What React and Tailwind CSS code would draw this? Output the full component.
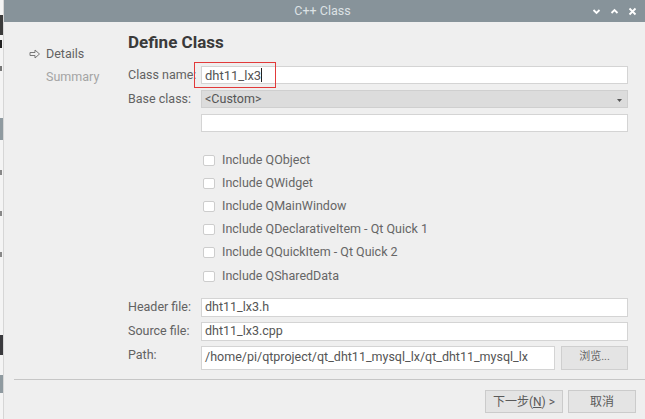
import React from 'react';

const FONT = { fontFamily: 'Roboto, "Noto Sans CJK SC", sans-serif' };

function Field({ children, className = '' }) {
  return (
    <div className={`h-[18px] flex items-center bg-white border border-[#d4d4d4] px-[3px] text-[12.5px] text-[#555] ${className}`}>
      {children}
    </div>
  );
}

function Row({ label, children, top = false }) {
  return (
    <div className={`flex ${top ? 'items-start' : 'items-center'}`}>
      <div className="w-[73px] shrink-0 text-[12.5px] text-[#626262]">{label}</div>
      <div className="flex-1 min-w-0">{children}</div>
    </div>
  );
}

function Check({ label }) {
  return (
    <div className="h-[23.2px] flex items-center pl-[2px]">
      <div className="w-[12px] h-[11px] bg-white border border-[#cdcdcd] rounded-[2px]" />
      <span className="ml-[7px] text-[12.5px] text-[#666]">{label}</span>
    </div>
  );
}

// Slice of the window behind the dialog, visible at the left edge.
function BackStrip() {
  return (
    <div className="relative w-[3px] shrink-0 bg-[#f4f4f4] overflow-hidden">
      <div className="absolute left-0 top-[15px] w-[3px] h-[20px] bg-[#3b3b3b]" />
      <div className="absolute left-0 top-[40px] w-[2px] h-[8px] bg-[#222]" />
      <div className="absolute left-0 top-[66px] w-[2px] h-[5px] bg-[#777]" />
      <div className="absolute left-0 top-[118px] w-[3px] h-[22px] bg-[#8f9aa0]" />
      <div className="absolute left-0 top-[170px] w-[2px] h-[5px] bg-[#888]" />
      <div className="absolute left-0 top-[211px] w-[2px] h-[5px] bg-[#888]" />
      <div className="absolute left-0 top-[252px] w-[2px] h-[5px] bg-[#888]" />
      <div className="absolute left-0 top-[335px] w-[3px] h-[20px] bg-[#3a3a3d]" />
      <div className="absolute left-0 top-[375px] w-[3px] h-[18px] bg-[#8f9aa0]" />
    </div>
  );
}

export default function App() {
  return (
    <div className="w-[645px] h-[419px] flex overflow-hidden bg-[#efefef]" style={FONT}>
      <BackStrip />
      <div className="flex-1 flex flex-col border-l border-[#d6d6d6] bg-[#efefef]">
        {/* title bar */}
        <div className="h-[22px] shrink-0 bg-[#87939a] relative flex items-center justify-center">
          <span className="text-[12.5px] text-[#dde2e5] ml-[-4px]">C++ Class</span>
          <div className="absolute right-[8px] top-0 h-[22px] flex items-center gap-[9px]">
            <svg width="9" height="9" viewBox="0 0 9 9"><path d="M1.5 3l3 3 3-3" stroke="#fff" strokeWidth="1.8" fill="none" /></svg>
            <svg width="9" height="9" viewBox="0 0 9 9"><path d="M1.5 6l3-3 3 3" stroke="#fff" strokeWidth="1.8" fill="none" /></svg>
            <svg width="9" height="9" viewBox="0 0 9 9"><path d="M1.5 1.5l6 6M7.5 1.5l-6 6" stroke="#fff" strokeWidth="1.8" fill="none" /></svg>
          </div>
        </div>

        <div className="flex-1 flex">
          {/* wizard steps */}
          <div className="w-[124px] shrink-0 pl-[25px] pt-[23px] text-[12.5px]">
            <div className="h-[18px] flex items-center text-[#626262]">
              <svg width="12" height="10" viewBox="0 0 12 10" className="mr-[5px]">
                <path d="M1 3.5h5v-2.5l4.5 4-4.5 4v-2.5h-5z" stroke="#777" strokeWidth="1" fill="none" strokeLinejoin="round" />
              </svg>
              Details
            </div>
            <div className="h-[18px] mt-[5px] pl-[17px] flex items-center text-[#a4a4a4]">Summary</div>
          </div>

          {/* page */}
          <div className="flex-1 pr-[17px] pt-[11px]">
            <div className="h-[20px] flex items-center text-[17px] font-bold text-[#3a3a3a]">Define Class</div>

            <div className="mt-[13px] flex flex-col gap-[5px]">
              <Row label="Class name:">
                <div className="relative">
                  <Field className="text-[13px]">
                    dht11_lx3<span className="inline-block w-px h-[14px] bg-[#222]" />
                  </Field>
                  <div className="absolute left-[-7px] top-[-4px] w-[82px] h-[26px] border border-[#e23a3a]" />
                </div>
              </Row>
              <Row label="Base class:">
                <div className="h-[18px] flex items-center justify-between bg-[#dcdcdc] border border-[#cfcfcf] px-[3px] text-[12.5px] text-[#555]">
                  &lt;Custom&gt;
                  <svg width="5" height="3" viewBox="0 0 5 3" className="mr-[2px] mt-[2px]"><path d="M0 0h5l-2.5 3z" fill="#555" /></svg>
                </div>
              </Row>
              <Row label="">
                <Field />
              </Row>
            </div>

            <div className="mt-[17px] pl-[73px]">
              <Check label="Include QObject" />
              <Check label="Include QWidget" />
              <Check label="Include QMainWindow" />
              <Check label="Include QDeclarativeItem - Qt Quick 1" />
              <Check label="Include QQuickItem - Qt Quick 2" />
              <Check label="Include QSharedData" />
            </div>

            <div className="mt-[10px] flex flex-col gap-[5px]">
              <Row label="Header file:">
                <Field className="h-[19px]">dht11_lx3.h</Field>
              </Row>
              <Row label="Source file:">
                <Field className="h-[19px]">dht11_lx3.cpp</Field>
              </Row>
              <Row label="Path:" top>
                <div className="flex gap-[6px]">
                  <div className="flex-1 h-[24px] flex items-center bg-white border border-[#d4d4d4] px-[3px] text-[12.5px] text-[#555] whitespace-nowrap overflow-hidden">
                    /home/pi/qtproject/qt_dht11_mysql_lx/qt_dht11_mysql_lx
                  </div>
                  <div className="w-[67px] h-[24px] flex items-center justify-center bg-[#e4e4e4] border border-[#cfcfcf] text-[11px] text-[#666]">
                    浏览...
                  </div>
                </div>
              </Row>
            </div>
          </div>
        </div>

        <div className="ml-[10px] h-px bg-[#c6c6c6] mb-[10px]" />
        <div className="h-[29px] flex justify-end gap-[5px] pr-[9px]">
          <div className="w-[78px] h-[23px] flex items-center justify-center bg-[#e4e4e4] border border-[#cbcbcb] text-[12px] text-[#5a5a5a]">
            下一步(<span className="underline">N</span>) &gt;
          </div>
          <div className="w-[68px] h-[23px] flex items-center justify-center bg-[#e4e4e4] border border-[#cbcbcb] text-[12px] text-[#5a5a5a]">
            取消
          </div>
        </div>
      </div>
    </div>
  );
}
